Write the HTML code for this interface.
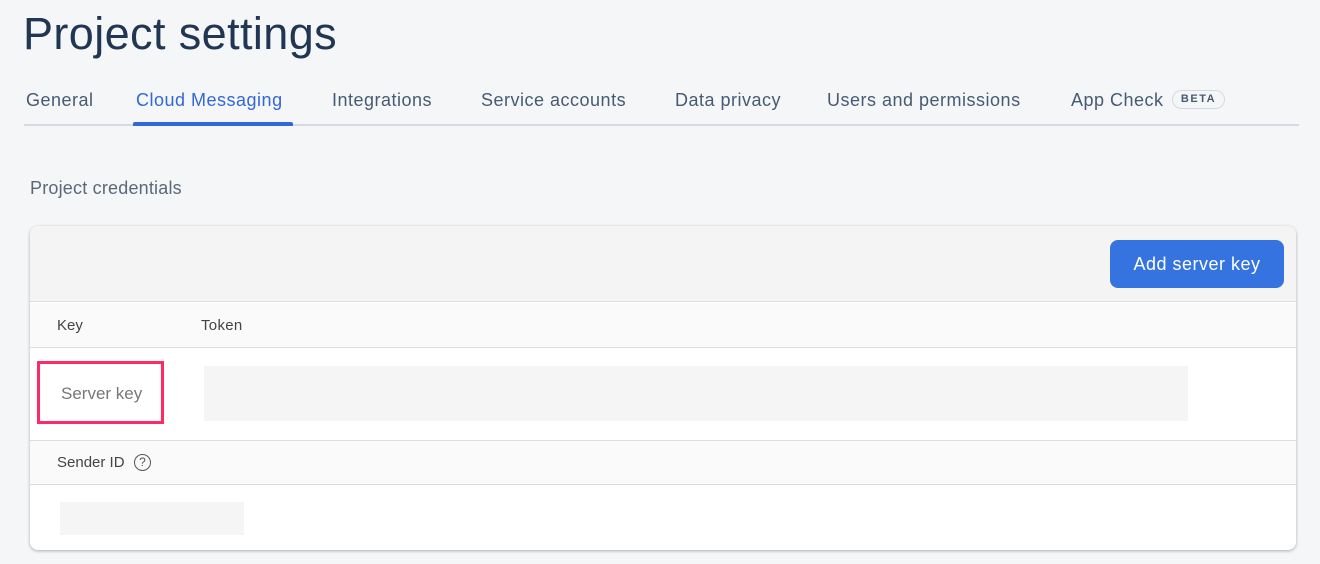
<!DOCTYPE html>
<html><head><style>
*{margin:0;padding:0;box-sizing:border-box}
body{width:1320px;height:564px;background:#f5f6f8;font-family:"Liberation Sans",sans-serif;position:relative;overflow:hidden}
.a{position:absolute;white-space:nowrap}
.tab{position:absolute;top:88px;font-size:18px;color:#485a73;line-height:24px;letter-spacing:.5px}
</style></head><body>
<div class="a" style="left:23px;top:7px;font-size:45px;color:#203652;line-height:54px;letter-spacing:.4px">Project settings</div>
<div class="tab" style="left:26px">General</div>
<div class="tab" style="left:136px;color:#3367d6">Cloud Messaging</div>
<div class="tab" style="left:332px">Integrations</div>
<div class="tab" style="left:481px">Service accounts</div>
<div class="tab" style="left:675px">Data privacy</div>
<div class="tab" style="left:827px">Users and permissions</div>
<div class="tab" style="left:1071px">App Check</div>
<div class="a" style="left:1172px;top:90px;width:53px;height:19px;border:1px solid #d5d9de;border-radius:10px;font-size:11px;font-weight:bold;letter-spacing:1.5px;color:#485a73;text-align:center;line-height:17px">BETA</div>
<div class="a" style="left:24px;top:124px;width:1275px;height:2px;background:#d6dbe2"></div>
<div class="a" style="left:133px;top:122px;width:160px;height:4px;background:#3367d6;border-radius:2px 2px 0 0"></div>
<div class="a" style="left:30px;top:178px;font-size:18px;color:#5a6878;letter-spacing:.2px">Project credentials</div>
<div class="a" style="left:30px;top:226px;width:1266px;height:324px;background:#fff;border-radius:8px;box-shadow:0 1px 3px rgba(0,0,0,.3);overflow:hidden">
 <div class="a" style="left:0;top:0;width:100%;height:76px;background:#f4f4f4;border-bottom:1px solid #ddd"></div>
 <div class="a" style="left:1080px;top:14px;width:174px;height:48px;background:#3574e0;border-radius:8px;color:#fff;font-size:18px;text-align:center;line-height:48px;letter-spacing:.5px">Add server key</div>
 <div class="a" style="left:0;top:77px;width:100%;height:45px;background:#fafafa;border-bottom:1px solid #ddd"></div>
 <div class="a" style="left:27px;top:91px;font-size:15px;color:#444">Key</div>
 <div class="a" style="left:171px;top:91px;font-size:15px;color:#444;letter-spacing:.3px">Token</div>
 <div class="a" style="left:7px;top:135px;width:127px;height:63px;border:3px solid #ff2966"></div>
 <div class="a" style="left:31px;top:158px;font-size:17px;color:#777">Server key</div>
 <div class="a" style="left:174px;top:140px;width:984px;height:55px;background:#f5f5f5"></div>
 <div class="a" style="left:0;top:214px;width:100%;height:45px;background:#fafafa;border-top:1px solid #ddd;border-bottom:1px solid #ddd"></div>
 <div class="a" style="left:27px;top:228px;font-size:15px;color:#444">Sender ID</div>
 <div class="a" style="left:104px;top:228px;width:17px;height:17px;border:1.5px solid #555;border-radius:50%;font-size:12px;color:#555;text-align:center;line-height:15px">?</div>
 <div class="a" style="left:30px;top:276px;width:184px;height:33px;background:#f5f5f5"></div>
</div>
</body></html>
